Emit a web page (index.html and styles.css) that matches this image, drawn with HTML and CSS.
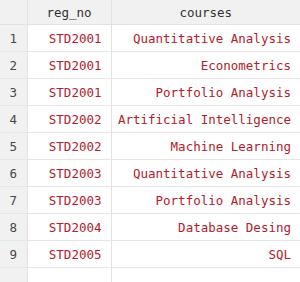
FILE: index.html
```html
<!DOCTYPE html>
<html>
<head>
<meta charset="utf-8">
<link rel="stylesheet" href="styles.css">
</head>
<body>
<div class="frame">
<table class="grid">
  <colgroup><col class="c-idx"><col class="c-reg"><col class="c-course"></colgroup>
  <thead>
    <tr><th class="idx"></th><th>reg_no</th><th>courses</th></tr>
  </thead>
  <tbody>
    <tr><td class="idx">1</td><td>STD2001</td><td>Quantitative Analysis</td></tr>
    <tr><td class="idx">2</td><td>STD2001</td><td>Econometrics</td></tr>
    <tr><td class="idx">3</td><td>STD2001</td><td>Portfolio Analysis</td></tr>
    <tr><td class="idx">4</td><td>STD2002</td><td>Artificial Intelligence</td></tr>
    <tr><td class="idx">5</td><td>STD2002</td><td>Machine Learning</td></tr>
    <tr><td class="idx">6</td><td>STD2003</td><td>Quantitative Analysis</td></tr>
    <tr><td class="idx">7</td><td>STD2003</td><td>Portfolio Analysis</td></tr>
    <tr><td class="idx">8</td><td>STD2004</td><td>Database Desing</td></tr>
    <tr><td class="idx">9</td><td>STD2005</td><td>SQL</td></tr>
    <tr class="filler"><td class="idx"></td><td></td><td></td></tr>
  </tbody>
</table>
</div>
</body>
</html>
```
FILE: styles.css
```css
html, body {
  margin: 0;
  padding: 0;
  background: #ffffff;
}
.frame {
  width: 300px;
  height: 282px;
  overflow: hidden;
}
.grid {
  border-collapse: collapse;
  table-layout: fixed;
  width: 300px;
  font-family: "DejaVu Sans Mono", "Liberation Mono", monospace;
  font-size: 12.5px;
}
.c-idx { width: 27px; }
.c-reg { width: 84px; }
.c-course { width: 189px; }
.grid th {
  height: 24px;
  padding: 0;
  background: #f1f1f1;
  color: #333333;
  font-weight: normal;
  text-align: center;
  border-bottom: 1px solid #e2e2e2;
  border-left: 1px solid #e2e2e2;
}
.grid th:first-child { border-left: none; }
.grid td {
  height: 26px;
  padding: 0 9px 0 0;
  color: #b2202d;
  text-align: right;
  border-bottom: 1px solid #e6e6e6;
  border-left: 1px solid #e2e2e2;
  white-space: nowrap;
}
.grid td.idx {
  border-left: none;
  padding: 0;
  text-align: center;
  background: #f1f1f1;
  color: #474747;
}
.grid tr.filler td { height: 20px; border-bottom: none; }
```
